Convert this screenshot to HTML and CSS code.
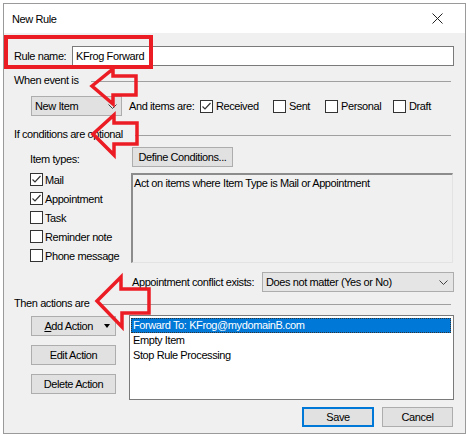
FILE: index.html
```html
<!DOCTYPE html>
<html lang="en">
<head>
  <meta charset="UTF-8" />
  <title>New Rule</title>
  <link rel="stylesheet" href="styles.css">
</head>
<body>
  <div class="window">
    <div class="titlebar">
      <span class="title">New Rule</span>
      <span class="close">
        <svg width="11" height="11" viewBox="0 0 11 11"><path d="M0.5 0.5 L10.5 10.5 M10.5 0.5 L0.5 10.5" stroke="#222" stroke-width="1" fill="none"/></svg>
      </span>
    </div>

    <div class="content">
      <div class="name-row">
        <span class="name-label">Rule name:</span>
        <div class="textbox">KFrog Forward</div>
      </div>

      <div class="group-head"><span>When event is</span></div>

      <div class="event-row">
        <div class="combo combo-event">
          <span>New Item</span>
          <svg class="chev" width="9" height="5" viewBox="0 0 9 5"><path d="M0.5 0.5 L4.5 4.5 L8.5 0.5" stroke="#444" fill="none"/></svg>
        </div>
        <span class="and">And items are:</span>
        <div class="check check-received">
          <span class="box"><svg width="11" height="11" viewBox="0 0 11 11"><path d="M1.5 5.5 L4 8 L9.5 2" stroke="#333" stroke-width="1.2" fill="none"/></svg></span>
          Received
        </div>
        <div class="check check-sent"><span class="box"></span>Sent</div>
        <div class="check check-personal"><span class="box"></span>Personal</div>
        <div class="check"><span class="box"></span>Draft</div>
      </div>

      <div class="group-head"><span>If conditions are optional</span></div>

      <div class="cond">
        <div class="types">
          <div class="types-title">Item types:</div>
          <div class="check">
            <span class="box"><svg width="11" height="11" viewBox="0 0 11 11"><path d="M1.5 5.5 L4 8 L9.5 2" stroke="#333" stroke-width="1.2" fill="none"/></svg></span>
            Mail
          </div>
          <div class="check">
            <span class="box"><svg width="11" height="11" viewBox="0 0 11 11"><path d="M1.5 5.5 L4 8 L9.5 2" stroke="#333" stroke-width="1.2" fill="none"/></svg></span>
            Appointment
          </div>
          <div class="check"><span class="box"></span>Task</div>
          <div class="check"><span class="box"></span>Reminder note</div>
          <div class="check"><span class="box"></span>Phone message</div>
        </div>
        <div class="cond-right">
          <button class="btn btn-define">Define Conditions...</button>
          <div class="desc">Act on items where Item Type is Mail or Appointment</div>
        </div>
      </div>

      <div class="conflict-row">
        <span class="conflict-label">Appointment conflict exists:</span>
        <div class="combo combo-conflict">
          <span>Does not matter (Yes or No)</span>
          <svg class="chev" width="9" height="5" viewBox="0 0 9 5"><path d="M0.5 0.5 L4.5 4.5 L8.5 0.5" stroke="#444" fill="none"/></svg>
        </div>
      </div>

      <div class="group-head"><span>Then actions are</span></div>

      <div class="actions">
        <div class="action-btns">
          <button class="btn btn-add"><span><u>A</u>dd Action</span><span class="tri"></span></button>
          <button class="btn">Edit Action</button>
          <button class="btn">Delete Action</button>
        </div>
        <div class="action-list">
          <div class="item selected">Forward To: KFrog@mydomainB.com</div>
          <div class="item">Empty Item</div>
          <div class="item">Stop Rule Processing</div>
        </div>
      </div>

      <div class="footer">
        <button class="btn btn-save">Save</button>
        <button class="btn btn-cancel">Cancel</button>
      </div>
    </div>
  </div>

  <!-- annotation marks drawn over the dialog -->
  <svg class="marks" width="466" height="435" viewBox="0 0 466 435">
    <rect x="6" y="37" width="145" height="30" fill="none" stroke="#ec1c24" stroke-width="4"/>
    <polygon points="92,86 113,69 113,76 136,76 136,95 113,95 113,104" fill="none" stroke="#ec1c24" stroke-width="3.5" stroke-linejoin="miter"/>
    <polygon points="93,134 114,115 114,123 137,123 137,144 114,144 114,155" fill="none" stroke="#ec1c24" stroke-width="3.5" stroke-linejoin="miter"/>
    <polygon points="97,301 121,277 121,289 149,289 149,313 122,313 122,327" fill="none" stroke="#ec1c24" stroke-width="3.5" stroke-linejoin="miter"/>
  </svg>
</body>
</html>
```

FILE: styles.css
```css
body {
  margin: 0;
  background: #fff;
  font-family: "Liberation Sans", Arial, sans-serif;
  font-size: 11px;
  letter-spacing: -0.4px;
  color: #000;
  position: relative;
  width: 466px;
  height: 435px;
  overflow: hidden;
}

.window {
  margin: 3px 0 0 3px;
  width: 463px;
  height: 431px;
  box-sizing: border-box;
  border: 1px solid #9a9a9a;
  background: #f0f0f0;
}

.titlebar {
  height: 29px;
  background: #fff;
  display: flex;
  align-items: center;
  justify-content: space-between;
  padding-left: 8px;
}

.title {
  font-size: 11px;
}

.close {
  width: 46px;
  height: 29px;
  margin-right: 5px;
  display: flex;
  align-items: center;
  justify-content: center;
}

.content {
  padding: 0 11px 0 10px;
}

.name-row {
  margin-top: 13px;
  display: flex;
  align-items: center;
  height: 20px;
}

.name-label {
  width: 58px;
}

.textbox {
  flex: 1;
  height: 20px;
  box-sizing: border-box;
  border: 1px solid #7a7a7a;
  background: #fff;
  padding-left: 3px;
  line-height: 18px;
}

.group-head {
  display: flex;
  height: 14px;
  line-height: 14px;
  margin-top: 11px;
}

.group-head::after {
  content: '';
  flex: 1;
  align-self: flex-start;
  margin: 8px 3px 0 12px;
  border-top: 1px solid #a0a0a0;
}

.name-row + .group-head {
  margin-top: 7px;
}

.event-row {
  margin-top: 9px;
  display: flex;
  align-items: center;
  height: 20px;
  padding-left: 17px;
}

.combo {
  height: 20px;
  box-sizing: border-box;
  background: #e1e1e1;
  border: 1px solid #adadad;
  padding: 0 4px 0 3px;
  display: flex;
  align-items: center;
  justify-content: space-between;
}

.combo-event {
  width: 91px;
}

.and {
  margin-left: 7px;
  width: 71px;
}

.check {
  display: flex;
  align-items: center;
}

.box {
  width: 13px;
  height: 13px;
  box-sizing: border-box;
  border: 1px solid #333;
  background: #fff;
  margin-right: 3px;
  display: flex;
  align-items: center;
  justify-content: center;
}

.check-received { width: 73px; }
.check-sent { width: 52px; }
.check-personal { width: 68px; }

.cond {
  display: flex;
  margin-top: 6px;
  padding-left: 16px;
}

.types {
  width: 101px;
  padding-top: 5px;
}

.types-title {
  line-height: 14px;
  margin-bottom: 4px;
}

.types .check {
  height: 19px;
}

.types .box {
  margin-right: 2px;
}

.cond-right {
  flex: 1;
  display: flex;
  flex-direction: column;
  align-items: flex-start;
}

.btn {
  height: 20px;
  box-sizing: border-box;
  background: #e1e1e1;
  border: 1px solid #adadad;
  padding: 0;
  font: inherit;
  letter-spacing: inherit;
  color: #000;
  text-align: center;
}

.btn-define {
  width: 101px;
  margin-left: 1px;
}

.desc {
  align-self: stretch;
  margin: 6px 1px 0 0;
  height: 90px;
  box-sizing: border-box;
  border-style: solid;
  border-width: 2px 1px 1px 2px;
  border-color: #8c8c8c #e3e3e3 #e3e3e3 #8c8c8c;
  padding: 1px 1px;
  line-height: 14px;
}

.conflict-row {
  margin-top: 7px;
  display: flex;
  align-items: center;
  height: 20px;
  padding-left: 118px;
}

.conflict-label {
  width: 130px;
}

.combo-conflict {
  flex: 1;
  background: #e5e5e5;
  padding-right: 5px;
}

.conflict-row + .group-head {
  margin-top: 4px;
}

.actions {
  display: flex;
  margin-top: 5px;
  padding-left: 17px;
}

.action-btns {
  width: 85px;
  margin-right: 13px;
  padding-top: 1px;
  display: flex;
  flex-direction: column;
  gap: 9px;
}

.btn-add {
  display: flex;
  align-items: center;
  justify-content: flex-end;
  padding-right: 5px;
}

.btn-add .tri {
  margin-left: 11px;
  width: 0;
  height: 0;
  border-left: 3px solid transparent;
  border-right: 3px solid transparent;
  border-top: 4px solid #000;
}

.action-list {
  flex: 1;
  height: 85px;
  box-sizing: border-box;
  background: #fff;
  border: 1px solid #7a7a7a;
  padding: 2px 2px 0 1px;
}

.item {
  height: 15px;
  line-height: 15px;
  padding-left: 2px;
}

.item.selected {
  background: #0078d7;
  color: #fff;
  outline: 1px dotted #333;
  outline-offset: -1px;
}

.footer {
  display: flex;
  justify-content: flex-end;
  gap: 8px;
  margin: 7px 1px 0 0;
}

.btn-save {
  width: 72px;
  border: 1px solid #0078d7;
  box-shadow: inset 0 0 0 1px #0078d7;
}

.btn-cancel {
  width: 71px;
}

.marks {
  position: absolute;
  top: 0;
  left: 0;
  pointer-events: none;
}
```
